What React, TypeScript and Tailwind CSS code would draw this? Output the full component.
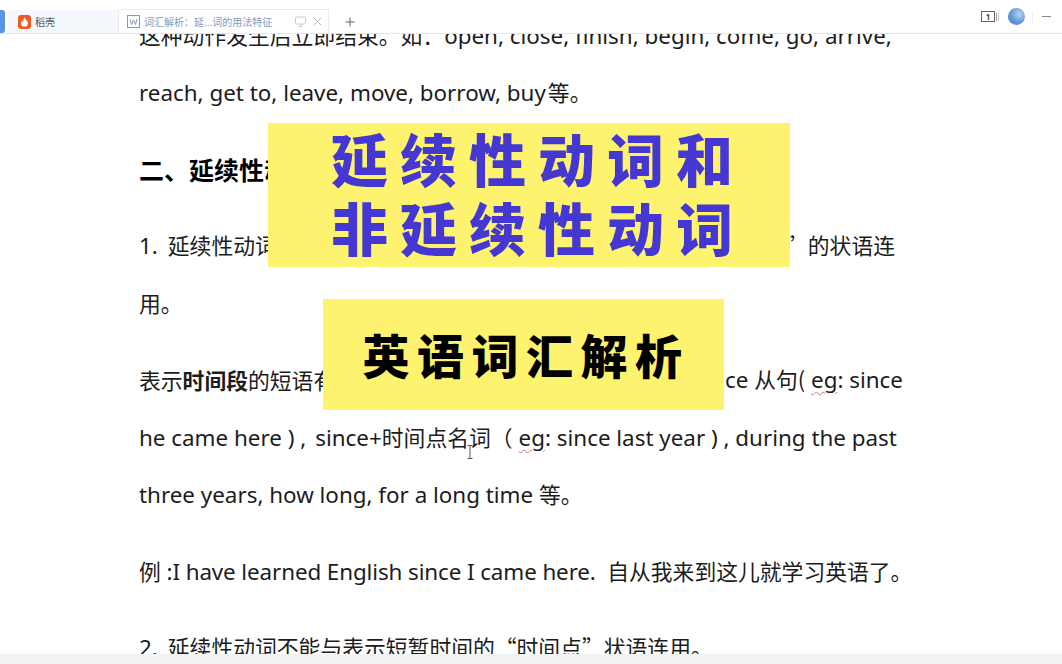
import { Plus, X } from "lucide-react";
import type { ReactNode } from "react";

const lineClass = "flex h-[57.5px] items-center justify-between whitespace-nowrap";

function Cn({ children }: { children: ReactNode }) {
  return <span className="text-[21.800px] [font-family:'Noto_Sans_CJK_SC',sans-serif]">{children}</span>;
}

function Typo({ children }: { children: string }) {
  return <span className="underline decoration-wavy decoration-[#d9707a] decoration-1 underline-offset-[3px]">{children}</span>;
}

function TabBar() {
  return (
    <header className="relative z-10 flex h-[34px] shrink-0 items-end border-b border-[#e3e5e8] bg-white">
      {/* left marker */}
      <div className="h-[23px] w-[5px] rounded-r-[3px] bg-[#5b93e6]" />
      <div className="ml-[3px] flex h-[23px] w-[110px] items-center gap-[4px] bg-[#f5f9fd] pl-[10px]">
        <svg width="13" height="14" viewBox="0 0 13 14">
          <rect width="13" height="14" rx="3" fill="#ee5a24" />
          <path d="M6.6 2.4c.4 1.8 3.4 3.2 3.4 6 0 2-1.500 3.200-3.500 3.200S3 10.400 3 8.500c0-1.300.7-2.200 1.400-2.900.1 1 .5 1.500 1 1.700-.2-1.800 0-3.500 1.200-4.900z" fill="#fff" />
        </svg>
        <span className="text-[10px] text-[#555] [font-family:'Noto_Sans_CJK_SC',sans-serif]">稻壳</span>
      </div>
      <div className="flex h-[24px] w-[211px] items-center border border-b-0 border-[#e8eaed] bg-white pl-[8px]">
        <svg width="13" height="13" viewBox="0 0 13 13" fill="none" stroke="#7d9cc4" strokeWidth="1">
          <rect x="0.500" y="0.500" width="12" height="12" />
          <path d="M3 4l1.500 5.500L6.500 5l2 4.500L10 4" />
        </svg>
        <span className="ml-[4px] w-[147px] truncate text-[10px] text-[#7d9cc4] [font-family:'Noto_Sans_CJK_SC',sans-serif]">词汇解析：延...词的用法特征</span>
        <svg className="ml-[4px]" width="11" height="11" viewBox="0 0 11 11" fill="none" stroke="#c8ccd0" strokeWidth="1">
          <rect x="0.500" y="1" width="10" height="7" rx="1" />
          <path d="M5.500 8v2M3.500 10.500h4" />
        </svg>
        <X className="ml-[5px] text-[#9a9ea3]" size={13} strokeWidth={1.300} />
      </div>
      <Plus className="mb-[4px] ml-[14px] text-[#555]" size={14} strokeWidth={1.600} />
      <div className="mb-[8px] ml-auto flex items-center">
        <div className="flex items-center">
          <div className="flex h-[11px] w-[14px] items-center justify-center border border-[#666] text-[8px] leading-none font-bold text-[#444]">1</div>
          <div className="ml-[1px] h-[8px] w-[1px] bg-[#aaa]" />
          <div className="ml-[1px] h-[8px] w-[1px] bg-[#ccc]" />
        </div>
        <div className="ml-[9px] h-[17px] w-[17px] rounded-full bg-[radial-gradient(circle_at_65%_35%,#b9d3f0,#5f97d8_55%,#3f79c4)]" />
        <div className="ml-[7px] h-[12px] w-[1px] bg-[#eceff2]" />
        <div className="mr-[11px] ml-[9px] h-[1px] w-[9px] bg-[#888]" />
      </div>
    </header>
  );
}

function Doc() {
  return (
    <main className="min-h-0 flex-1 overflow-hidden bg-white">
      <div className="-mt-[27px] ml-[139px] w-[764px] text-[22.400px] text-[#1c1c1c] [font-family:'Noto_Sans',sans-serif]">
        <div className={lineClass}><span><Cn>这种动作发生后立即结束。如：</Cn>open, close, finish, begin, come, go, arrive,</span></div>
        <div className={lineClass}><span>reach, get to, leave, move, borrow, buy<span className="ml-[2px]"><Cn>等。</Cn></span></span></div>
        <div className={`${lineClass} mt-[19px] text-[25px] font-bold text-black [font-family:'Noto_Sans_CJK_SC',sans-serif]`}><span>二、延续性动词</span></div>
        <div className={`${lineClass} mt-[19px]`}>
          <span>1.<span className="ml-[10px]"><Cn>延续性动词</Cn></span></span>
          <span className="pr-[8px]"><Cn>”的状语连</Cn></span>
        </div>
        <div className={lineClass}><Cn>用。</Cn></div>
        <div className={`${lineClass} mt-[19px]`}>
          <Cn>表示<b>时间段</b>的短语有</Cn>
          <span>ce <Cn>从句(</Cn> <Typo>eg</Typo>: since</span>
        </div>
        <div className={lineClass}>
          <span>
            he came here ) ,<span className="ml-[9px]">since+</span><Cn>时间点名词（</Cn>
            <span className="ml-[6px]"><Typo>eg</Typo>: since last year ) , during the past</span>
          </span>
        </div>
        <div className={lineClass}><span>three years, how long, for a long time <Cn>等。</Cn></span></div>
        <div className={`${lineClass} mt-[19px]`}>
          <span>
            <Cn>例</Cn>
            <span className="tracking-[-0.100px]"> :I have learned English since I came here.&nbsp; </span>
            <Cn>自从我来到这儿就学习英语了。</Cn>
          </span>
        </div>
        <div className={`${lineClass} mt-[19px]`}>
          <span>2.<span className="ml-[10px]"><Cn>延续性动词不能与表示短暂时间的“时间点”状语连用。</Cn></span></span>
        </div>
      </div>
    </main>
  );
}

export default function App() {
  return (
    <div className="relative flex h-[664px] w-[1062px] flex-col overflow-hidden bg-white">
      <TabBar />
      <Doc />
      <div className="h-[10px] shrink-0 bg-[#f3f3f3]" />

      {/* title cards lying over the document */}
      <div className="absolute top-[123px] left-[268px] flex h-[144px] w-[522px] flex-col items-center justify-center bg-[#fef36f] pb-[6px] pl-[18px] text-[57px] leading-[69px] font-black tracking-[12px] text-[#4538d2] [font-family:'Noto_Sans_CJK_SC',sans-serif]">
        <div>延续性动词和</div>
        <div>非延续性动词</div>
      </div>
      <div className="absolute top-[299px] left-[323px] flex h-[111px] w-[401px] items-center justify-center bg-[#fef36f] pl-[5px] text-[47px] font-black tracking-[7.500px] text-black [font-family:'Noto_Sans_CJK_SC',sans-serif]">
        英语词汇解析
      </div>

      {/* text cursor */}
      <svg className="absolute top-[445px] left-[466px]" width="8" height="14" viewBox="0 0 8 14" fill="none" stroke="#555" strokeWidth="1">
        <path d="M1.500 .5h5M4 .5v13M1.500 13.500h5" />
      </svg>
    </div>
  );
}
